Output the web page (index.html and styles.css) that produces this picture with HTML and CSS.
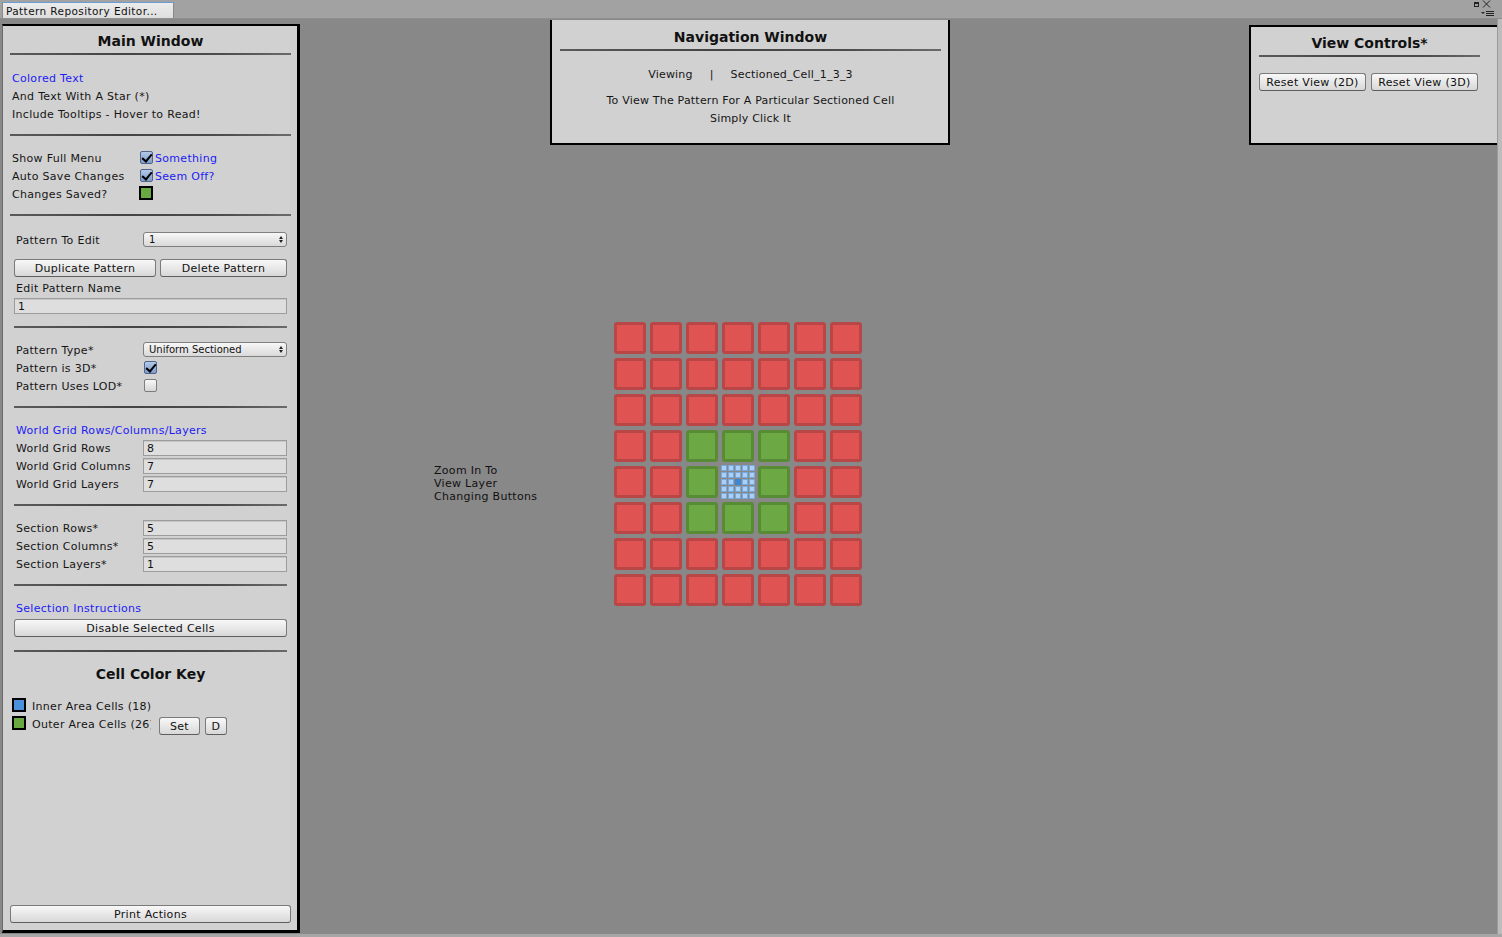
FILE: index.html
```html
<!DOCTYPE html>
<html lang="en">
<head>
  <meta charset="UTF-8">
  <title>Pattern Repository Editor</title>
  <link rel="stylesheet" href="styles.css">
</head>
<body>
<div class="topbar">
  <div class="tab">Pattern Repository Editor...</div>
  <svg class="win-icons" width="28" height="19" viewBox="0 0 28 19">
    <rect x="1.5" y="2.5" width="4" height="4" fill="none" stroke="#222" stroke-width="1"/>
    <rect x="1.5" y="2.5" width="4" height="1.5" fill="#222"/>
    <path d="M10 0.5 L17 7.5 M17 0.5 L10 7.5" stroke="#222" stroke-width="1"/>
    <path d="M8 12 L12 12 L10 14 Z" fill="#222"/>
    <path d="M13 11.5 H21 M13 13.5 H21 M13 15.5 H21" stroke="#222" stroke-width="1"/>
  </svg>
</div>

<div class="canvas">
  <!-- left editor window -->
  <div class="window main-window">
    <div class="win-title">Main Window</div>
    <div class="sep"></div>

    <div class="block first">
      <div class="row pad blue">Colored Text</div>
      <div class="row pad">And Text With A Star (*)</div>
      <div class="row pad">Include Tooltips - Hover to Read!</div>
    </div>
    <div class="sep gap11"></div>

    <div class="block">
      <div class="row">
        <span class="label wide">Show Full Menu</span>
        <span class="check on"></span><span class="blue check-text">Something</span>
      </div>
      <div class="row">
        <span class="label wide">Auto Save Changes</span>
        <span class="check on"></span><span class="blue check-text">Seem Off?</span>
      </div>
      <div class="row">
        <span class="label saved">Changes Saved?</span>
        <span class="swatch green"></span>
      </div>
    </div>
    <div class="sep gap11"></div>

    <div class="group">
      <div class="row top15">
        <span class="label">Pattern To Edit</span>
        <div class="dropdown">1<span class="arrows"></span></div>
      </div>
      <div class="btn-row">
        <button class="btn dup">Duplicate Pattern</button>
        <button class="btn del">Delete Pattern</button>
      </div>
      <div class="row pad top2">Edit Pattern Name</div>
      <div class="field full">1</div>
      <div class="sep gap12"></div>

      <div class="block">
        <div class="row">
          <span class="label">Pattern Type*</span>
          <div class="dropdown">Uniform Sectioned<span class="arrows"></span></div>
        </div>
        <div class="row">
          <span class="label">Pattern is 3D*</span>
          <span class="check on shift"></span>
        </div>
        <div class="row">
          <span class="label">Pattern Uses LOD*</span>
          <span class="check shift"></span>
        </div>
      </div>
      <div class="sep gap11"></div>

      <div class="block">
        <div class="row pad blue">World Grid Rows/Columns/Layers</div>
        <div class="row"><span class="label">World Grid Rows</span><div class="field">8</div></div>
        <div class="row"><span class="label">World Grid Columns</span><div class="field">7</div></div>
        <div class="row"><span class="label">World Grid Layers</span><div class="field">7</div></div>
      </div>
      <div class="sep gap11"></div>

      <div class="block">
        <div class="row"><span class="label">Section Rows*</span><div class="field">5</div></div>
        <div class="row"><span class="label">Section Columns*</span><div class="field">5</div></div>
        <div class="row"><span class="label">Section Layers*</span><div class="field">1</div></div>
      </div>
      <div class="sep gap11"></div>

      <div class="block">
        <div class="row pad blue">Selection Instructions</div>
      </div>
      <button class="btn full-btn">Disable Selected Cells</button>
      <div class="sep gap13"></div>
    </div>

    <div class="win-title key-title">Cell Color Key</div>
    <div class="key">
      <div class="row">
        <span class="swatch blue-fill"></span>
        <span class="key-text">Inner Area Cells (18)</span>
      </div>
      <div class="row">
        <span class="swatch green"></span>
        <span class="key-text clip">Outer Area Cells (26)</span>
        <button class="btn small set">Set</button>
        <button class="btn small d">D</button>
      </div>
    </div>

    <button class="btn print">Print Actions</button>
  </div>

  <!-- navigation window -->
  <div class="window nav-window">
    <div class="win-title">Navigation Window</div>
    <div class="sep"></div>
    <div class="nav-line first-line">
      <span>Viewing</span><span class="bar">|</span><span>Sectioned_Cell_1_3_3</span>
    </div>
    <div class="nav-line second">To View The Pattern For A Particular Sectioned Cell</div>
    <div class="nav-line">Simply Click It</div>
  </div>

  <!-- view controls window -->
  <div class="window view-window">
    <div class="win-title">View Controls*</div>
    <div class="sep"></div>
    <div class="view-btns">
      <button class="btn">Reset View (2D)</button>
      <button class="btn">Reset View (3D)</button>
    </div>
  </div>

  <div class="zoom-note">Zoom In To<br>View Layer<br>Changing Buttons</div>

  <div class="cell-grid" id="cell-grid"></div>

  <div class="side-strip"></div>
</div>
<div class="statusbar"></div>

<script>
  // r = outer cell, g = inner area cell, s = sectioned cell being viewed
  const layout = [
    'rrrrrrr',
    'rrrrrrr',
    'rrrrrrr',
    'rrgggrr',
    'rrgsgrr',
    'rrgggrr',
    'rrrrrrr',
    'rrrrrrr'
  ];
  const grid = document.getElementById('cell-grid');

  layout.forEach(line => {
    line.split('').forEach(type => {
      const cell = document.createElement('div');
      if (type === 's') {
        cell.className = 'section';
        for (let i = 0; i < 25; i++) {
          const mini = document.createElement('div');
          mini.className = i === 12 ? 'mini current' : 'mini';
          cell.appendChild(mini);
        }
      } else {
        cell.className = type === 'g' ? 'cell inner' : 'cell';
      }
      grid.appendChild(cell);
    });
  });
</script>
</body>
</html>
```

FILE: styles.css
```css
body {
  margin: 0;
  width: 1502px;
  height: 937px;
  overflow: hidden;
  background: #888888;
  font-family: 'DejaVu Sans', Verdana, sans-serif;
  font-size: 11px;
  letter-spacing: 0.3px;
  color: #151515;
}
button {
  font-family: inherit;
  letter-spacing: inherit;
}

/* top tab strip */
.topbar {
  height: 19px;
  background: #a2a2a2;
  border-bottom: 1px solid #8f8f8f;
  box-sizing: border-box;
  display: flex;
  align-items: flex-end;
  padding-left: 2px;
  position: relative;
}
.tab {
  width: 172px;
  height: 16px;
  box-sizing: border-box;
  background: linear-gradient(#ececec, #dedede);
  border: 1px solid #8a8a8a;
  border-top: 1px solid #6d9bd6;
  border-bottom: none;
  padding: 1px 0 0 3px;
  line-height: 15px;
  font-size: 10.5px;
  letter-spacing: 0.4px;
  color: #111;
}
.win-icons {
  position: absolute;
  right: 1px;
  top: 0;
}

.canvas {
  position: relative;
  height: 915px;
  background: #888888;
}
.statusbar {
  height: 3px;
  background: #a6a6a6;
}
.side-strip {
  position: absolute;
  right: 0;
  top: 0;
  bottom: 0;
  width: 4px;
  background: #bcbcbc;
  border-left: 1px solid #9a9a9a;
}

/* floating editor windows */
.window {
  position: absolute;
  box-sizing: border-box;
  background: #d1d1d1;
  border: 2px solid #000;
}
.win-title {
  font-weight: bold;
  font-size: 14px;
  letter-spacing: 0;
  text-align: center;
  line-height: 24px;
  color: #111;
}
.sep {
  height: 2px;
  background: linear-gradient(to right, #5a5a5a, #444 40%, #4c4c4c 75%, #6a6a6a);
}
.gap11 { margin-top: 11px; }
.gap12 { margin-top: 12px; }
.gap13 { margin-top: 13px; }

.main-window {
  left: 2px;
  top: 5px;
  width: 298px;
  height: 909px;
  border-left: 1px solid #6a6a6a;
  border-right-width: 3px;
  border-bottom-width: 3px;
  padding: 0 6px 0 7px;
  display: flex;
  flex-direction: column;
}
.main-window > .win-title {
  margin-top: 3px;
}
.block {
  margin-top: 13px;
}
.block.first {
  margin-top: 14px;
}
/* text sits one pixel low in an 18px row, controls get their own offset */
.row {
  height: 18px;
  line-height: 20px;
  display: flex;
  align-items: flex-start;
  white-space: nowrap;
}
.pad {
  padding-left: 2px;
}
.blue {
  color: #1c1cf4;
}
.label {
  width: 127px;
  padding-left: 2px;
  flex-shrink: 0;
}
.label.wide {
  width: 128px;
}
.label.saved {
  width: 127px;
}
.check-text {
  margin-left: 2px;
}

.check {
  width: 13px;
  height: 13px;
  margin-top: 2px;
  box-sizing: border-box;
  border: 1px solid #7c7c7c;
  border-radius: 2px;
  background: linear-gradient(#f7f7f7, #d6d6d6);
  position: relative;
  flex-shrink: 0;
}
.check.on {
  background: linear-gradient(#b3c8e6, #7f9ccb);
  border-color: #51658a;
}
.check.on::after {
  content: '';
  position: absolute;
  left: 3px;
  top: 0;
  width: 4px;
  height: 8px;
  border: solid #000;
  border-width: 0 2px 2px 0;
  transform: rotate(40deg);
}
.check.shift {
  margin-left: 1px;
}

.swatch {
  width: 14px;
  height: 14px;
  margin-top: 1px;
  box-sizing: border-box;
  border: 2px solid #000;
  flex-shrink: 0;
}
.swatch.green {
  background: #6aa842;
}
.swatch.blue-fill {
  background: #4a90dc;
}

/* inner group of controls */
.group {
  margin: 0 4px;
  display: flex;
  flex-direction: column;
}
.top15 { margin-top: 15px; }
.top2 { margin-top: 2px; }

.dropdown {
  flex: 1;
  height: 15px;
  margin-top: 1px;
  box-sizing: border-box;
  border: 1px solid #7f7f7f;
  border-radius: 3px;
  background: linear-gradient(#f7f7f7, #d9d9d9);
  font-size: 10px;
  letter-spacing: 0;
  line-height: 14px;
  padding-left: 5px;
  position: relative;
  color: #111;
}
.arrows {
  position: absolute;
  right: 5px;
  top: 3px;
  width: 0;
  height: 7px;
}
.arrows::before,
.arrows::after {
  content: '';
  position: absolute;
  left: -2px;
  border-left: 2px solid transparent;
  border-right: 2px solid transparent;
}
.arrows::before {
  top: 0;
  border-bottom: 3px solid #222;
}
.arrows::after {
  bottom: 0;
  border-top: 3px solid #222;
}

.field {
  flex: 1;
  height: 16px;
  margin-top: 1px;
  box-sizing: border-box;
  border: 1px solid #9c9c9c;
  background: #dedede;
  box-shadow: inset 0 1px 0 #c6c6c6;
  line-height: 15px;
  padding-left: 3px;
  color: #111;
}
.field.full {
  flex: none;
  margin-top: 1px;
}

.btn {
  height: 18px;
  box-sizing: border-box;
  border: 1px solid #7a7a7a;
  border-bottom-color: #5e5e5e;
  border-radius: 3px;
  background: linear-gradient(#f8f8f8, #d8d8d8);
  font-size: 11px;
  color: #111;
  padding: 1px 0 0;
  line-height: 16px;
  text-align: center;
}
.btn-row {
  display: flex;
  gap: 4px;
  margin-top: 10px;
}
.btn.dup {
  width: 142px;
}
.btn.del {
  flex: 1;
}
.full-btn {
  margin-top: 2px;
}

.main-window > .key-title {
  margin-top: 10px;
}
.key {
  margin-top: 11px;
  padding-left: 2px;
}
.key-text {
  margin-left: 6px;
}
.key-text.clip {
  width: 119px;
  overflow: hidden;
}
.btn.small {
  margin-top: 2px;
}
.btn.set {
  width: 41px;
  margin-left: 8px;
}
.btn.d {
  width: 22px;
  margin-left: 5px;
}
.print {
  margin-top: auto;
  margin-bottom: 7px;
}

/* navigation window */
.nav-window {
  left: 550px;
  top: 1px;
  width: 400px;
  height: 125px;
  border-top: none;
  padding: 0 7px 0 8px;
}
.nav-window .win-title {
  margin-top: 6px;
  line-height: 23px;
}
.nav-line {
  text-align: center;
  line-height: 18px;
  letter-spacing: 0.2px;
}
.nav-line.first-line {
  margin-top: 15px;
}
.nav-line .bar {
  margin: 0 17px;
}
.nav-line.second {
  margin-top: 8px;
}

/* view controls window */
.view-window {
  left: 1249px;
  top: 6px;
  width: 260px;
  height: 120px;
  padding-left: 8px;
}
.view-window .win-title {
  width: 221px;
  margin-top: 4px;
}
.view-window .sep {
  width: 221px;
}
.view-btns {
  display: flex;
  gap: 5px;
  margin-top: 16px;
}
.view-btns .btn {
  width: 107px;
}

.zoom-note {
  position: absolute;
  left: 434px;
  top: 445px;
  line-height: 13px;
  color: #111;
}

/* section cell grid */
.cell-grid {
  position: absolute;
  left: 614px;
  top: 303px;
  display: grid;
  grid-template-columns: repeat(7, 32px);
  grid-auto-rows: 32px;
  gap: 4px;
}
.cell {
  box-sizing: border-box;
  border: 3px solid #b94747;
  border-radius: 3px;
  background: #e05353;
}
.cell.inner {
  border-color: #578b34;
  background: #6ca843;
}
.section {
  margin: -1px 0 0 -1px;
  width: 34px;
  height: 34px;
  display: grid;
  grid-template-columns: repeat(5, 6px);
  grid-auto-rows: 6px;
  gap: 1px;
}
.mini {
  box-sizing: border-box;
  border: 1px solid #79a9db;
  background: #a9d0f9;
}
.mini.current {
  background: #3c86d4;
  border-color: #3c86d4;
}
```
